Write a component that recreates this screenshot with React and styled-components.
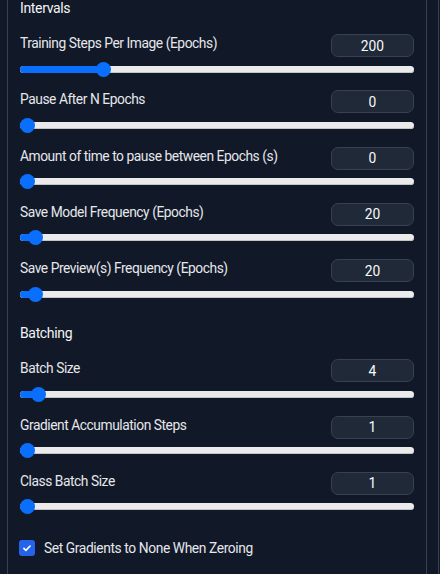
import React from "react";
import styled, { createGlobalStyle } from "styled-components";

const GlobalStyle = createGlobalStyle`
  html, body {
    margin: 0;
    padding: 0;
    background: #111827;
  }
  body {
    font-family: Roboto, "Noto Sans", sans-serif;
    color: #e5e7eb;
  }
`;

const Frame = styled.div`
  width: 439px;
  height: 574px;
  overflow: hidden;
  border-right: 1px solid #374151;
  box-sizing: border-box;
  background: #111827;
`;

const Panel = styled.div`
  margin-left: 7px;
  width: 420px;
  height: 100%;
  box-sizing: border-box;
  border-left: 1px solid #374151;
  border-right: 1px solid #374151;
  padding: 0 12px;
  display: flex;
  flex-direction: column;
`;

const Group = styled.section`
  display: flex;
  flex-direction: column;
  margin-bottom: ${(p) => p.$after || 0}px;
`;

const Heading = styled.h4`
  margin: 0 0 ${(p) => p.$gap || 20}px;
  font-size: 14px;
  line-height: 16px;
  letter-spacing: -0.35px;
  font-weight: 400;
  color: #f3f4f6;
`;

const Row = styled.div`
  display: flex;
  flex-direction: column;
  margin-bottom: 9.25px;
`;

const Top = styled.div`
  display: flex;
  justify-content: space-between;
  align-items: flex-start;
  height: 23px;
`;

const Label = styled.span`
  font-size: 13.8px;
  line-height: 18px;
  letter-spacing: -0.45px;
  color: #e5e7eb;
`;

const NumberBox = styled.div`
  width: 83px;
  height: 23px;
  box-sizing: border-box;
  border: 1px solid #374151;
  border-radius: 7px;
  background: #1f2937;
  display: flex;
  align-items: center;
  justify-content: center;
  font-size: 13.8px;
  color: #f9fafb;
`;

const SliderArea = styled.div`
  position: relative;
  height: 24px;
  display: flex;
  align-items: center;
`;

const Track = styled.div`
  position: relative;
  width: 100%;
  height: 7px;
  border-radius: 4px;
  background: #ebebeb;
  box-shadow: inset 0 -1px 0 #c4c4c4;
`;

const Fill = styled.div`
  position: absolute;
  left: 0;
  top: 0;
  bottom: 0;
  border-radius: 4px;
  background: #0b6ffd;
`;

const Thumb = styled.div`
  position: absolute;
  top: 50%;
  width: 15px;
  height: 15px;
  margin-left: -7.5px;
  margin-top: -7.5px;
  border-radius: 50%;
  background: #0b6ffd;
`;

const CheckRow = styled.label`
  display: flex;
  align-items: center;
  gap: 9px;
  margin-left: -1px;
  font-size: 13.8px;
  letter-spacing: -0.4px;
  color: #e5e7eb;
`;

const Box = styled.span`
  width: 16px;
  height: 16px;
  border-radius: 3px;
  background: #2563eb;
  display: flex;
  align-items: center;
  justify-content: center;
`;

const Slider = ({ value, min, max }) => {
  const span = 393 - 15;
  const x = 7.5 + ((value - min) / (max - min)) * span;
  return (
    <SliderArea>
      <Track>
        <Fill style={{ width: x }} />
        <Thumb style={{ left: x }} />
      </Track>
    </SliderArea>
  );
};

const Field = ({ label, value, min, max }) => (
  <Row>
    <Top>
      <Label>{label}</Label>
      <NumberBox>{value}</NumberBox>
    </Top>
    <Slider value={value} min={min} max={max} />
  </Row>
);

const intervals = [
  { label: "Training Steps Per Image (Epochs)", value: 200, min: 0, max: 1000 },
  { label: "Pause After N Epochs", value: 0, min: 0, max: 100 },
  { label: "Amount of time to pause between Epochs (s)", value: 0, min: 0, max: 3600 },
  { label: "Save Model Frequency (Epochs)", value: 20, min: 0, max: 1000 },
  { label: "Save Preview(s) Frequency (Epochs)", value: 20, min: 0, max: 1000 },
];

const batching = [
  { label: "Batch Size", value: 4, min: 1, max: 100 },
  { label: "Gradient Accumulation Steps", value: 1, min: 1, max: 100 },
  { label: "Class Batch Size", value: 1, min: 1, max: 100 },
];

export default function App() {
  return (
    <>
      <GlobalStyle />
      <Frame>
        <Panel>
          <Group $after={10}>
            <Heading $gap={18}>Intervals</Heading>
            {intervals.map((f) => (
              <Field key={f.label} {...f} />
            ))}
          </Group>
          <Group $after={12}>
            <Heading $gap={18}>Batching</Heading>
            {batching.map((f) => (
              <Field key={f.label} {...f} />
            ))}
          </Group>
          <CheckRow>
            <Box>
              <svg width="10" height="10" viewBox="0 0 16 16">
                <path d="M3 8.5l3.2 3.2L13 4.8" fill="none" stroke="#fff" strokeWidth="2.6" strokeLinecap="round" strokeLinejoin="round" />
              </svg>
            </Box>
            Set Gradients to None When Zeroing
          </CheckRow>
        </Panel>
      </Frame>
    </>
  );
}
